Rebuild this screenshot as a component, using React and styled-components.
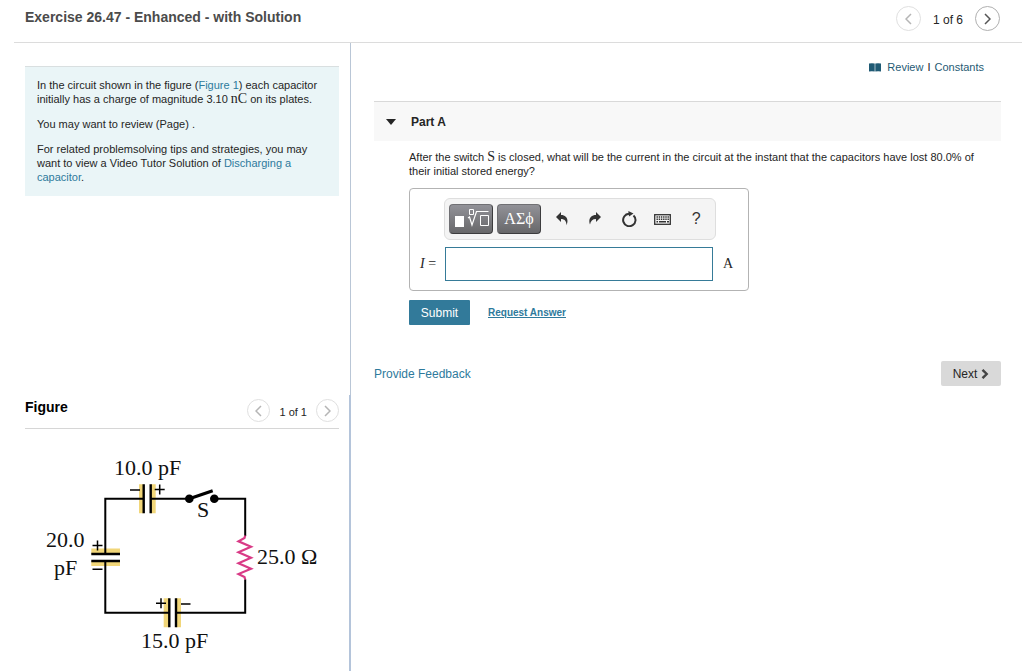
import styled, { createGlobalStyle } from "styled-components";

const GlobalStyle = createGlobalStyle`
    * {
        box-sizing: border-box;
    }
    body {
        margin: 0;
        background: #fff;
        color: #252525;
        font-family: "Liberation Sans", Arial, sans-serif;
        font-size: 11px;
        line-height: 14px;
    }
    button, input {
        font-family: inherit;
    }
`;

const Page = styled.div`
    display: flex;
    flex-direction: column;
    min-height: 100vh;
`;

/* ====== Header ====== */
const Header = styled.header`
    display: flex;
    align-items: flex-start;
    justify-content: space-between;
    height: 43px;
    margin: 0 2px 0 14px;
    padding: 6px 22px 0 11px;
    border-bottom: 1px solid #dcdcdc;
`;

const Title = styled.h1`
    margin: 0;
    color: #4b4b4b;
    font-size: 14px;
    line-height: 22px;
`;

const Pager = styled.nav`
    display: flex;
    align-items: center;
    gap: ${(props) => (props.$small ? 9 : 12)}px;
    font-size: ${(props) => (props.$small ? 11 : 12)}px;

    span {
        padding-top: 2px;
    }
`;

const RoundButton = styled.button`
    display: flex;
    align-items: center;
    justify-content: center;
    width: ${(props) => (props.$small ? 23 : 25)}px;
    height: ${(props) => (props.$small ? 23 : 25)}px;
    padding: 0;
    border: 1px solid ${(props) => (props.$active ? "#b0b0b0" : "#e0e0e0")};
    border-radius: 50%;
    background: #fff;
    color: ${(props) => (props.$active ? "#555" : "#b5b5b5")};
`;

/* ====== Left side ====== */
const Body = styled.div`
    display: flex;
    flex: 1;
`;

const Side = styled.aside`
    display: flex;
    flex-direction: column;
    flex: 0 0 351px;
`;

const Intro = styled.section`
    height: 352px;
    padding: 23px 11px 0 25px;
    border-right: 1px solid #b9c6d6;
`;

const Problem = styled.div`
    padding: 11px 11px 12px 12px;
    border-top: 1px solid #d9dfe0;
    background: #eaf5f7;

    p {
        margin: 0 0 11px;
    }
    p:last-child {
        margin: 0;
    }
`;

const TextLink = styled.a`
    color: #2e7a9c;
    text-decoration: none;
`;

const MathText = styled.span`
    font-family: "Liberation Serif", serif;
    font-size: 14px;
    line-height: 1;
`;

const Figure = styled.section`
    flex: 1;
    padding: 0 10px 0 25px;
    border-right: 2px solid #b4c4da;
`;

const FigureHead = styled.div`
    display: flex;
    align-items: flex-start;
    justify-content: space-between;
    height: 34px;
    padding-top: 4px;
    border-bottom: 1px solid #d6d6d6;

    h2 {
        margin: 0;
        color: #000;
        font-size: 14px;
        line-height: 16px;
    }
`;

const Circuit = styled.svg`
    display: block;
    width: 100%;

    text {
        fill: #111;
        font-family: "Liberation Serif", serif;
        font-size: 22px;
    }
`;

/* ====== Right side ====== */
const Main = styled.main`
    flex: 1;
    padding: 17px 23px 0;
`;

const Resources = styled.div`
    display: flex;
    align-items: center;
    justify-content: flex-end;
    gap: 4px;
    padding-right: 17px;

    a {
        color: #1f5a74;
        text-decoration: none;
    }
    svg {
        margin-right: 2px;
    }
`;

const PartHeader = styled.button`
    display: flex;
    align-items: center;
    gap: 15px;
    width: 100%;
    height: 40px;
    margin-top: 27px;
    padding: 0 12px;
    border: 0;
    border-top: 1px solid #d9d9d9;
    background: #f8f8f8;
    color: #252525;
    font-size: 12px;
    font-weight: bold;
`;

const PartBody = styled.div`
    padding: 9px 12px 0 35px;

    p {
        margin: 0;
    }
`;

const Editor = styled.div`
    display: grid;
    grid-template-columns: 25px 270px auto;
    align-items: center;
    row-gap: 7px;
    width: 340px;
    margin-top: 10px;
    padding: 9px 10px;
    border: 1px solid #b3b3b3;
    border-radius: 4px;

    label {
        font-family: "Liberation Serif", serif;
        font-size: 14px;
    }
`;

const Toolbar = styled.div`
    display: flex;
    align-items: center;
    gap: 4px;
    grid-column: 1 / -1;
    width: 272px;
    height: 42px;
    margin-left: 24px;
    padding: 0 2px 0 4px;
    border: 1px solid #dedede;
    border-radius: 6px;
    background: #f4f4f4;
`;

const PaletteButton = styled.button`
    display: flex;
    align-items: center;
    justify-content: center;
    width: 44px;
    height: 30px;
    padding: 0;
    border: 1px solid #3c3c3e;
    border-top-color: #707074;
    border-left-color: #707074;
    border-radius: 4px;
    background: linear-gradient(#929298, #68686a);
    color: #fff;
    font-family: "Liberation Serif", serif;
    font-size: 16px;
`;

const Tools = styled.div`
    display: flex;
    flex: 1;
`;

const Tool = styled.button`
    display: flex;
    align-items: center;
    justify-content: center;
    flex: 1;
    height: 30px;
    padding: 0;
    border: 0;
    background: none;
    color: #333;
    font-size: 16px;
`;

const Answer = styled.input`
    width: 268px;
    height: 34px;
    padding: 0 8px;
    border: 1px solid #367b98;
    font-size: 14px;
    outline: none;
`;

const Unit = styled(MathText)`
    padding-left: 8px;
`;

const Actions = styled.div`
    display: flex;
    align-items: center;
    gap: 18px;
    margin-top: 9px;

    a {
        color: #2e7a9c;
        font-size: 10px;
        font-weight: bold;
    }
`;

const Submit = styled.button`
    width: 61px;
    height: 25px;
    padding: 0;
    border: 0;
    border-radius: 1px;
    background: #327a9a;
    color: #fff;
    font-size: 12px;
`;

const Footer = styled.footer`
    display: flex;
    align-items: center;
    justify-content: space-between;
    margin-top: 36px;
    font-size: 12px;
`;

const Next = styled.button`
    display: flex;
    align-items: center;
    justify-content: center;
    gap: 4px;
    width: 60px;
    height: 25px;
    padding: 0;
    border: 0;
    border-radius: 2px;
    background: #d9d9d9;
    color: #252525;
    font-size: 12px;
`;

const Chevron = ({ left }) => (
    <svg width="7" height="12" viewBox="0 0 7 12" fill="none" stroke="currentColor" strokeWidth="1.5">
        <path d={left ? "M6 1L1 6L6 11" : "M1 1L6 6L1 11"} />
    </svg>
);

const CircuitDiagram = () => (
    <Circuit viewBox="0 0 314 242" role="img" aria-label="Circuit with three capacitors, a switch and a resistor">
        <g fill="#f1d679">
            <path d="M114 55.3h4.7v29H114zM125.7 55.3h5v29h-5z" />
            <path d="M66.3 119.5H95v5.5H66.3zM66.3 132H95v5H66.3z" />
            <path d="M138.7 169.3h5.5v29h-5.5zM151 169.3h5v29h-5z" />
        </g>
        <g fill="none" stroke="#000" strokeWidth="2">
            <path d="M118.7 69.7H80.3V125M80.3 132V183.7H144.3M151 183.7H220.2V150.3M220.2 107V69.7H189.3M125.7 69.7H164.3" />
            <path d="M118.7 55.3v29M125.7 55.3v29M66.3 125H95M66.3 132H95M144.3 169.3v29M151 169.3v29" strokeWidth="2.4" />
            <path d="M164.3 69.7L187.7 61.7" strokeWidth="3.2" />
            <path d="M105 61h10M129.7 60.5h10M134.7 55.5v10M67.5 116.5h10M72.5 111.5v10M67.5 140.3h10M131 174.3h10M136 169.3v10M156 175h9.5" strokeWidth="1.5" />
        </g>
        <circle cx="164.3" cy="69.7" r="4.3" />
        <circle cx="189.3" cy="69.7" r="4.3" />
        <path
            d="M220.2 106.5L219.5 109L213.5 112.3L226 117.7L213.5 123.3L226 128.7L213.5 134.3L226 139.7L213.5 145L219.5 148L220.2 150.5"
            fill="none"
            stroke="#d93a86"
            strokeWidth="2.2"
        />
        <text x="89" y="46">10.0 pF</text>
        <text x="172" y="88">S</text>
        <text x="21" y="118">20.0</text>
        <text x="29" y="146">pF</text>
        <text x="232" y="135">25.0 Ω</text>
        <text x="116" y="219">15.0 pF</text>
    </Circuit>
);

const App = () => {
    return (
        <Page>
            <GlobalStyle />
            <Header>
                <Title>Exercise 26.47 - Enhanced - with Solution</Title>
                <Pager aria-label="Items">
                    <RoundButton aria-label="Previous item"><Chevron left /></RoundButton>
                    <span>1 of 6</span>
                    <RoundButton $active aria-label="Next item"><Chevron /></RoundButton>
                </Pager>
            </Header>
            <Body>
                <Side>
                    <Intro>
                        <Problem>
                            <p>
                                In the circuit shown in the figure (<TextLink href="#figure">Figure 1</TextLink>) each capacitor
                                initially has a charge of magnitude 3.10 <MathText>nC</MathText> on its plates.
                            </p>
                            <p>You may want to review (Page) .</p>
                            <p>
                                For related problemsolving tips and strategies, you may want to view a Video Tutor Solution
                                of <TextLink href="#video">Discharging a capacitor</TextLink>.
                            </p>
                        </Problem>
                    </Intro>
                    <Figure id="figure">
                        <FigureHead>
                            <h2>Figure</h2>
                            <Pager $small aria-label="Figures">
                                <RoundButton $small aria-label="Previous figure"><Chevron left /></RoundButton>
                                <span>1 of 1</span>
                                <RoundButton $small aria-label="Next figure"><Chevron /></RoundButton>
                            </Pager>
                        </FigureHead>
                        <CircuitDiagram />
                    </Figure>
                </Side>
                <Main>
                    <Resources>
                        <svg width="12" height="9" viewBox="0 0 12 9" fill="#1f5a74">
                            <path d="M0 .5Q3 -.2 5.7 .5V8.6Q3 7.8 0 8.6zM6.3 .5Q9 -.2 12 .5V8.6Q9 7.8 6.3 8.6z" />
                        </svg>
                        <a href="#review">Review</a>
                        <span>I</span>
                        <a href="#constants">Constants</a>
                    </Resources>
                    <PartHeader aria-expanded="true">
                        <svg width="10" height="6" viewBox="0 0 10 6" fill="#252525"><path d="M0 0h10L5 6z" /></svg>
                        Part A
                    </PartHeader>
                    <PartBody>
                        <p>
                            After the switch <MathText>S</MathText> is closed, what will be the current in the circuit at the
                            instant that the capacitors have lost 80.0% of their initial stored energy?
                        </p>
                        <Editor>
                            <Toolbar>
                                <PaletteButton aria-label="Templates">
                                    <svg width="36" height="22" viewBox="0 0 36 22" fill="none" stroke="#fff">
                                        <path d="M2 8h9v11H2z" fill="#fff" stroke="none" />
                                        <path d="M16.5 1.5h4v5h-4zM27.5 7.5h8v10h-8z" />
                                        <path d="M15 10l1.500-1L19 17L23.500 3.500H35.500" strokeWidth="1.2" />
                                    </svg>
                                </PaletteButton>
                                <PaletteButton aria-label="Symbols">ΑΣϕ</PaletteButton>
                                <Tools>
                                    <Tool aria-label="Undo">
                                        <svg width="12" height="14" viewBox="0 0 12 14" fill="currentColor">
                                            <path d="M0 5L5 0V3C10.5 3 13 7.5 10.5 13.3C10.5 9 8.5 7 5 7V10Z" />
                                        </svg>
                                    </Tool>
                                    <Tool aria-label="Redo">
                                        <svg width="12" height="14" viewBox="0 0 12 14" fill="currentColor">
                                            <path d="M12 5L7 0V3C1.5 3 -1 7.5 1 12.5C1.5 9 3.5 7 7 7V10Z" />
                                        </svg>
                                    </Tool>
                                    <Tool aria-label="Reset">
                                        <svg width="16" height="16" viewBox="0 0 16 16" fill="none" stroke="currentColor" strokeWidth="2">
                                            <path d="M12.5 4.4A6.2 6.2 0 1 1 8 2.8" />
                                            <path d="M7.3 0L12.5 2.6L8 5.6Z" fill="currentColor" stroke="none" />
                                        </svg>
                                    </Tool>
                                    <Tool aria-label="Keyboard shortcuts">
                                        <svg width="17" height="11" viewBox="0 0 17 11" fill="none" stroke="currentColor">
                                            <rect x=".7" y=".7" width="15.6" height="9.6" strokeWidth="1.3" />
                                            <path d="M2.5 3H15M2.5 5.3H15" strokeWidth="1.4" strokeDasharray="1.4 .8" />
                                            <path d="M2.5 7.8H4M5 7.8H12M13 7.8H15" strokeWidth="1.4" />
                                        </svg>
                                    </Tool>
                                    <Tool aria-label="Help">?</Tool>
                                </Tools>
                            </Toolbar>
                            <label htmlFor="current"><i>I</i> =</label>
                            <Answer id="current" type="text" />
                            <Unit>A</Unit>
                        </Editor>
                        <Actions>
                            <Submit>Submit</Submit>
                            <a href="#answer">Request Answer</a>
                        </Actions>
                    </PartBody>
                    <Footer>
                        <TextLink href="#feedback">Provide Feedback</TextLink>
                        <Next>
                            Next
                            <svg width="8" height="10" viewBox="0 0 8 10" fill="none" stroke="#444" strokeWidth="2.4">
                                <path d="M1.5 .8L5.7 5L1.5 9.2" />
                            </svg>
                        </Next>
                    </Footer>
                </Main>
            </Body>
        </Page>
    );
};

export default App;
